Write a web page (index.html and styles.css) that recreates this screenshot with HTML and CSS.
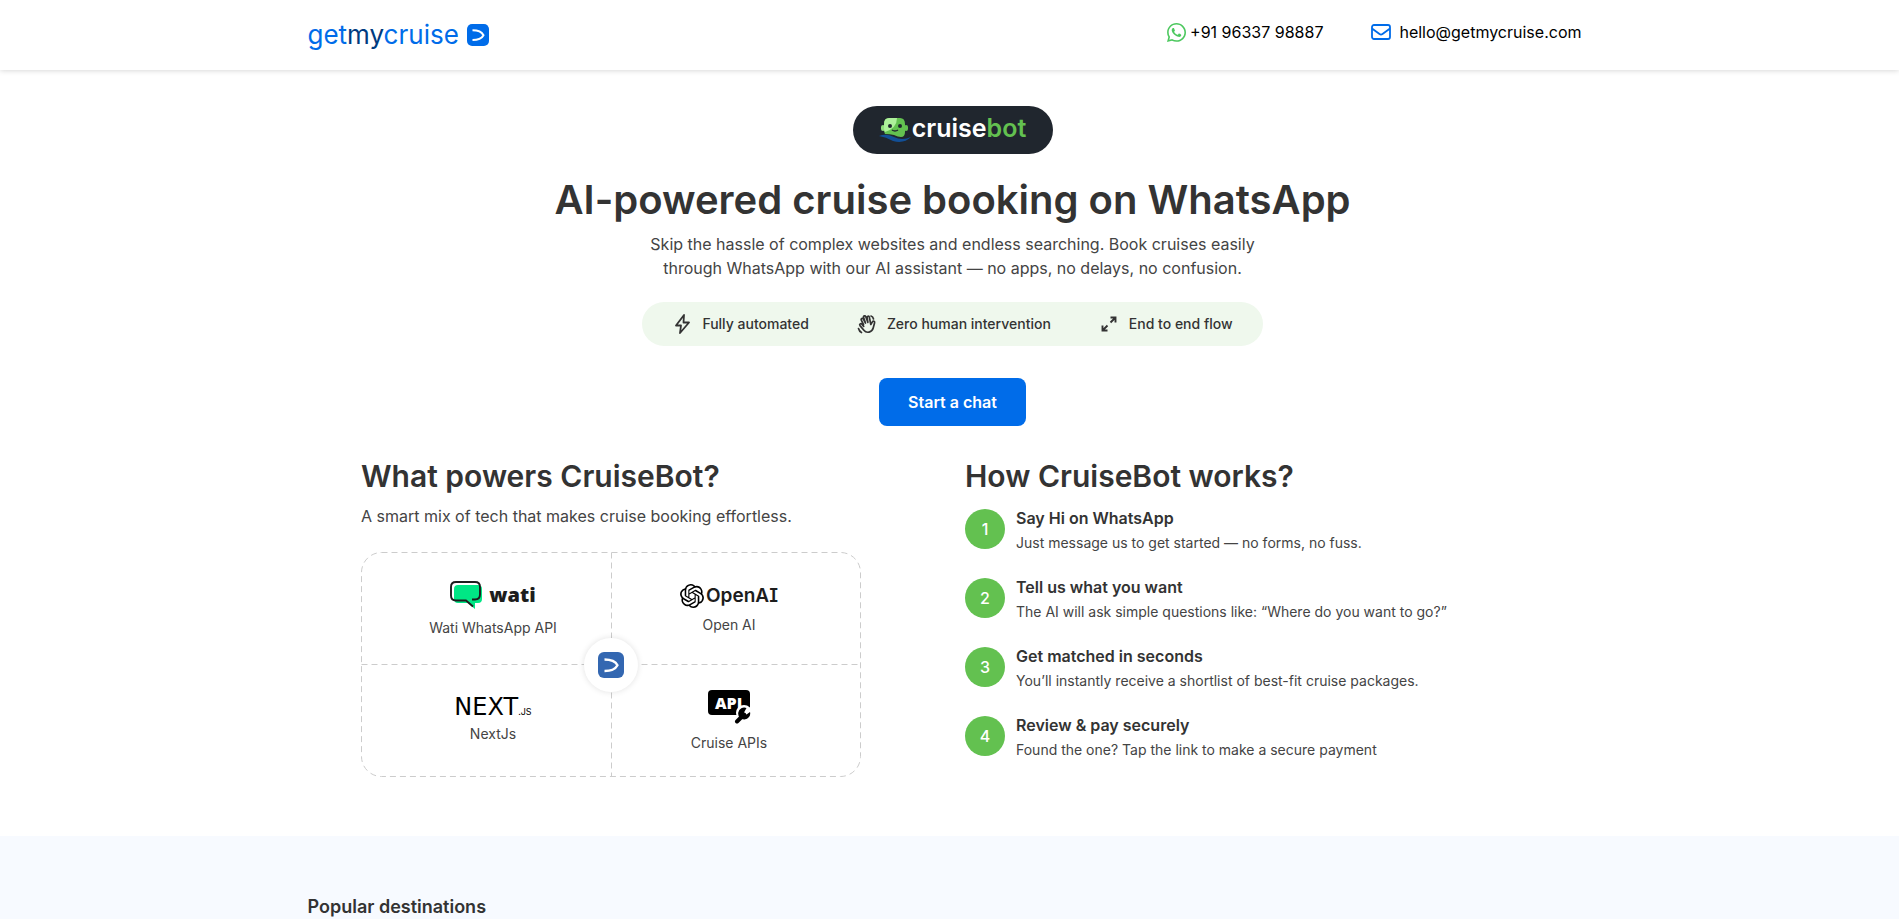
FILE: index.html
```
<!DOCTYPE html>
<html lang="en">
<head>
    <meta charset="UTF-8">
    <meta name="viewport" content="width=device-width, initial-scale=1.0">
    <title>CruiseBot | getmycruise</title>
    <link rel="stylesheet" href="styles.css">
</head>
<body>

    <header class="header">
        <div class="container header-inner">
            <a class="logo" href="#" aria-label="getmycruise">
                <span>get<span class="logo-dark">my</span>cruise</span>
                <svg class="logo-mark" viewBox="0 0 26 26">
                    <rect width="26" height="26" rx="6" fill="#006ce9"/>
                    <path d="M6.5 7.5c7 0 11 2 13 5.700-2 3.700-6 5.800-13 5.800" fill="none" stroke="#fff" stroke-width="2.4" stroke-linejoin="round"/>
                </svg>
            </a>
            <nav class="contact">
                <a class="contact-link" href="tel:+919633798887">
                    <svg class="icon-whatsapp" viewBox="0 32 448 448"><path fill="#4dc85f" d="M380.9 97.1C339 55.1 283.2 32 223.9 32c-122.4 0-222 99.6-222 222 0 39.1 10.2 77.3 29.6 111L0 480l117.7-30.9c32.4 17.7 68.9 27 106.1 27h.1c122.3 0 224.1-99.6 224.1-222 0-59.3-25.2-115-67.1-157zm-157 341.6c-33.2 0-65.7-8.9-94-25.7l-6.7-4-69.8 18.3L72 359.2l-4.4-7c-18.5-29.4-28.2-63.3-28.2-98.2 0-101.7 82.8-184.5 184.6-184.5 49.3 0 95.6 19.2 130.4 54.1 34.8 34.9 56.2 81.2 56.1 130.5 0 101.8-84.9 184.6-186.6 184.6zm101.2-138.2c-5.5-2.8-32.8-16.2-37.9-18-5.1-1.9-8.8-2.8-12.5 2.8-3.7 5.6-14.3 18-17.6 21.8-3.2 3.7-6.5 4.2-12 1.4-32.6-16.3-54-29.1-75.5-66-5.7-9.8 5.7-9.1 16.3-30.3 1.8-3.7.9-6.9-.5-9.7-1.4-2.8-12.5-30.1-17.1-41.2-4.5-10.8-9.1-9.3-12.5-9.5-3.2-.2-6.9-.2-10.6-.2-3.7 0-9.7 1.4-14.8 6.9-5.1 5.6-19.4 19-19.4 46.3 0 27.3 19.9 53.7 22.6 57.4 2.8 3.7 39.1 59.7 94.8 83.8 35.2 15.2 49 16.5 66.6 13.9 10.7-1.6 32.8-13.4 37.4-26.4 4.6-13 4.6-24.1 3.2-26.4-1.3-2.5-5-3.9-10.5-6.6z"/></svg>
                    +91 96337 98887
                </a>
                <a class="contact-link contact-mail" href="mailto:hello@getmycruise.com">
                    <svg class="icon-mail" viewBox="0 0 20 16" fill="none" stroke="#006ce9" stroke-width="1.8" stroke-linejoin="round"><rect x="1" y="1" width="18" height="14" rx="2"/><path d="M1 4.5l7.5 5.5q1.5 1 3 0L19 4.5"/></svg>
                    hello@getmycruise.com
                </a>
            </nav>
        </div>
    </header>

    <main class="main">
        <section class="hero">
            <div class="bot-badge">
                <svg class="bot-face" viewBox="0 0 32 26">
                    <rect x="2" y="8" width="4" height="6" rx="2" fill="#8fdc7c"/>
                    <rect x="25" y="8" width="4" height="6" rx="2" fill="#63c150"/>
                    <path d="M10 1h11q5 0 5 6v8q0 5-4 5-3 0-7-2-4-1-9-1-1-2-1-4V7q0-6 5-6z" fill="#63c150"/>
                    <path d="M10 1h8q0 10-12 14-1-1-1-3V7q0-6 5-6z" fill="#aef09b"/>
                    <circle cx="11" cy="9" r="2" fill="#20262e"/>
                    <circle cx="21" cy="9" r="2" fill="#20262e"/>
                    <path d="M13 13q3 2 6 0" fill="none" stroke="#20262e" stroke-width="1.5"/>
                    <path d="M0 19q7-3 15 1 8 4 17 0-7 7-18 4-7-4-14-5z" fill="#124f96"/>
                </svg>
                <span class="bot-name">cruise<span class="bot-green">bot</span></span>
            </div>
            <h1 class="hero-title">AI-powered cruise booking on WhatsApp</h1>
            <p class="hero-text">Skip the hassle of complex websites and endless searching. Book cruises easily through WhatsApp with our AI assistant — no apps, no delays, no confusion.</p>
            <ul class="features">
                <li>
                    <svg class="icon" viewBox="0 0 20 20" fill="none" stroke="#333" stroke-width="1.8" stroke-linejoin="round"><path d="M12 1L4 11.500h5L8 19l9-10.500h-5.500z"/></svg>
                    Fully automated
                </li>
                <li>
                    <svg class="icon" viewBox="0 0 20 20" fill="none" stroke="#333" stroke-width="1.7" stroke-linecap="round" stroke-linejoin="round"><path d="M6.5 10.5L4.3 6.200c-.8-1.600 1.300-2.600 2.100-1.100L8.5 9 6.600 3.500c-.6-1.600 1.600-2.400 2.200-.8l2.100 5.700-.8-4.700c-.3-1.700 2-2.100 2.300-.4l1.400 7.200 1.600-2.600c.9-1.400 2.600-.5 2.200.9l-1.400 5.200c-1.200 4.500-6.700 5.600-9.300 2.300L3 11.600c-1-1.400.8-2.700 1.900-1.400l1.800 2.200"/><path d="M14 2q2 .5 2.500 3M1.500 14.500q.8 3 3 4"/></svg>
                    Zero human intervention
                </li>
                <li>
                    <svg class="icon" viewBox="0 0 20 20" fill="none" stroke="#333" stroke-width="1.9"><path d="M11.5 8.5L16 4M11.5 3.5h5v5M8.5 11.5L4 16M3.5 11.5v5h5"/></svg>
                    End to end flow
                </li>
            </ul>
            <button class="chat-button" type="button">Start a chat</button>
        </section>

        <div class="columns">
            <section class="powers">
                <h2 class="section-title">What powers CruiseBot?</h2>
                <p class="powers-text">A smart mix of tech that makes cruise booking effortless.</p>
                <div class="tech-grid">
                    <svg class="tech-lines" fill="none" stroke="#ccc" stroke-dasharray="6 4">
                        <g transform="translate(0.5 0.5)">
                            <rect class="tech-frame" rx="20"/>
                            <line x1="50%" y1="0" x2="50%" y2="100%"/>
                            <line x1="0" y1="112" x2="100%" y2="112"/>
                        </g>
                    </svg>
                    <div class="tech tech-left">
                        <div class="tech-logo">
                            <svg class="wati-icon" viewBox="0 0 34 28">
                                <path d="M8 4h20q4 0 4 4v10q0 4-4 4h-3v6l-7-6H8q-4 0-4-4V8q0-4 4-4z" fill="#00e785"/>
                                <path d="M22 18.500h3q5 0 5-5V6q0-5-5-5H6Q1 1 1 6v8.500q0 5 5 5h10l7 6" fill="none" stroke="#1d1d1d" stroke-width="1.9"/>
                            </svg>
                            <span class="wati-name">wati</span>
                        </div>
                        <p>Wati WhatsApp API</p>
                    </div>
                    <div class="tech tech-right tech-openai">
                        <div class="tech-logo openai">
                            <svg class="openai-icon" viewBox="0 0 24 24"><path d="M22.2819 9.8211a5.9847 5.9847 0 0 0-.5157-4.9108 6.0462 6.0462 0 0 0-6.5098-2.9A6.0651 6.0651 0 0 0 4.9807 4.1818a5.9847 5.9847 0 0 0-3.9977 2.9 6.0462 6.0462 0 0 0 .7427 7.0966 5.98 5.98 0 0 0 .511 4.9107 6.051 6.051 0 0 0 6.5146 2.9001A5.9847 5.9847 0 0 0 13.2599 24a6.0557 6.0557 0 0 0 5.7718-4.2058 5.9894 5.9894 0 0 0 3.9977-2.9001 6.0557 6.0557 0 0 0-.7475-7.0729zm-9.022 12.6081a4.4755 4.4755 0 0 1-2.8764-1.0408l.1419-.0804 4.7783-2.7582a.7948.7948 0 0 0 .3927-.6813v-6.7369l2.02 1.1686a.071.071 0 0 1 .038.0615v5.5826a4.504 4.504 0 0 1-4.4945 4.4944zm-9.6607-4.1254a4.4708 4.4708 0 0 1-.5346-3.0137l.142.0852 4.783 2.7582a.7712.7712 0 0 0 .7806 0l5.8428-3.3685v2.3324a.0804.0804 0 0 1-.0332.0615L9.74 19.9502a4.4992 4.4992 0 0 1-6.1408-1.6464zM2.3408 7.8956a4.485 4.485 0 0 1 2.3655-1.9728V11.6a.7664.7664 0 0 0 .3879.6765l5.8144 3.3543-2.0201 1.1685a.0757.0757 0 0 1-.071 0l-4.8303-2.7865A4.504 4.504 0 0 1 2.3408 7.872zm16.5963 3.8558L13.1038 8.364 15.1192 7.2a.0757.0757 0 0 1 .071 0l4.8303 2.7913a4.4944 4.4944 0 0 1-.6765 8.1042v-5.6772a.79.79 0 0 0-.407-.667zm2.0107-3.0231l-.142-.0852-4.7735-2.7818a.7759.7759 0 0 0-.7854 0L9.409 9.2297V6.8974a.0662.0662 0 0 1 .0284-.0615l4.8303-2.7866a4.4992 4.4992 0 0 1 6.6802 4.66zM8.3065 12.863l-2.02-1.1638a.0804.0804 0 0 1-.038-.0567V6.0742a4.4992 4.4992 0 0 1 7.3757-3.4537l-.142.0805L8.704 5.459a.7948.7948 0 0 0-.3927.6813zm1.0976-2.3654l2.602-1.4998 2.6069 1.4998v2.9994l-2.5974 1.4997-2.6067-1.4997Z"/></svg>
                            <span class="openai-name">OpenAI</span>
                        </div>
                        <p>Open AI</p>
                    </div>
                    <div class="tech tech-left">
                        <div class="tech-logo next">
                            <span class="next-name">NEXT</span><span class="next-js">.JS</span>
                        </div>
                        <p>NextJs</p>
                    </div>
                    <div class="tech tech-right">
                        <svg class="api-icon" viewBox="0 0 44 34">
                            <rect x="1" width="42" height="25" rx="4"/>
                            <text class="api-name" x="8" y="19">API</text>
                            <circle cx="37" cy="23" r="8" fill="#fff"/>
                            <path d="M30 31l6-6" stroke="#fff" stroke-width="9"/>
                            <path d="M30 31.500l7-7" stroke="#000" stroke-width="4" stroke-linecap="round"/>
                            <path d="M39.500 18a6 6 0 1 0 3.500 4l-3.500 2.500-2.500-2z"/>
                        </svg>
                        <p>Cruise APIs</p>
                    </div>
                    <div class="tech-center">
                        <svg class="center-mark" viewBox="0 0 26 26">
                            <rect width="26" height="26" rx="6" fill="#3367b1"/>
                            <path d="M6.5 7.5c7 0 11 2 13 5.700-2 3.700-6 5.800-13 5.800" fill="none" stroke="#fff" stroke-width="2.4" stroke-linejoin="round"/>
                        </svg>
                    </div>
                </div>
            </section>

            <section class="works">
                <h2 class="section-title">How CruiseBot works?</h2>
                <ol class="steps">
                    <li class="step">
                        <span class="step-number">1</span>
                        <div>
                            <h3>Say Hi on WhatsApp</h3>
                            <p>Just message us to get started — no forms, no fuss.</p>
                        </div>
                    </li>
                    <li class="step">
                        <span class="step-number">2</span>
                        <div>
                            <h3>Tell us what you want</h3>
                            <p>The AI will ask simple questions like: “Where do you want to go?”</p>
                        </div>
                    </li>
                    <li class="step">
                        <span class="step-number">3</span>
                        <div>
                            <h3>Get matched in seconds</h3>
                            <p>You’ll instantly receive a shortlist of best-fit cruise packages.</p>
                        </div>
                    </li>
                    <li class="step">
                        <span class="step-number">4</span>
                        <div>
                            <h3>Review &amp; pay securely</h3>
                            <p>Found the one? Tap the link to make a secure payment</p>
                        </div>
                    </li>
                </ol>
            </section>
        </div>
    </main>

    <section class="destinations">
        <div class="container">
            <h2 class="destinations-title">Popular destinations</h2>
        </div>
    </section>

</body>
</html>
```
FILE: styles.css
```
* {
    box-sizing: border-box;
}

body {
    margin: 0;
    font-family: Inter, sans-serif;
    font-size: 16px;
    line-height: 24px;
    color: #333;
    background-color: #fff;
}

h1, h2, h3, p, ul, ol {
    margin: 0;
    padding: 0;
}

ul, ol {
    list-style: none;
}

svg {
    display: block;
    flex-shrink: 0;
}

.container {
    max-width: 1290px;
    margin: 0 auto;
}

.header, .main, .destinations {
    padding-left: 6px;
}

.header {
    box-shadow: 0 0 6px rgba(0, 0, 0, 0.2);
}

.header-inner {
    display: flex;
    justify-content: space-between;
    height: 70px;
    padding: 20px 16px 0 0;
}

.logo {
    display: flex;
    align-items: center;
    gap: 8px;
    height: 29px;
    font-size: 26px;
    line-height: 26px;
    color: #006ce9;
    text-decoration: none;
}

.logo-dark {
    color: #003b80;
}

.logo-mark {
    width: 22px;
    height: 22px;
}

.contact {
    display: flex;
    gap: 48px;
}

.contact-link {
    display: flex;
    align-items: center;
    gap: 4px;
    height: 24px;
    color: #000;
    text-decoration: none;
}

.contact-mail {
    gap: 8px;
}

.icon-whatsapp {
    width: 19px;
    height: 19px;
}

.icon-mail {
    width: 20px;
    height: 16px;
}

.hero {
    display: flex;
    flex-direction: column;
    align-items: center;
    padding-top: 36px;
    text-align: center;
}

.bot-badge {
    display: flex;
    justify-content: center;
    align-items: center;
    gap: 1px;
    width: 200px;
    height: 48px;
    padding-bottom: 4px;
    background-color: #20262e;
    border-radius: 24px;
}

.bot-face {
    width: 32px;
    height: 26px;
    margin-top: 4px;
}

.bot-name {
    font-size: 25px;
    font-weight: 600;
    color: #fff;
}

.bot-green {
    color: #63c150;
}

.hero-title {
    margin-top: 21px;
    font-size: 40px;
    font-weight: 600;
    line-height: 50px;
}

.hero-text {
    max-width: 620px;
    margin-top: 7px;
    color: #444;
}

.features {
    display: flex;
    gap: 48px;
    margin-top: 22px;
    padding: 10px 30px;
    background-color: #eff8ed;
    border-radius: 22px;
    font-size: 14px;
    font-weight: 500;
}

.features li {
    display: flex;
    align-items: center;
    gap: 10px;
}

.icon {
    width: 20px;
    height: 20px;
}

.chat-button {
    height: 48px;
    margin-top: 32px;
    padding: 0 29px;
    background-color: #006ce9;
    color: #fff;
    border: none;
    border-radius: 8px;
    font-family: inherit;
    font-size: 16px;
    font-weight: 600;
    cursor: pointer;
}

.columns {
    display: grid;
    grid-template-columns: 500px 500px;
    gap: 104px;
    max-width: 1183px;
    margin: 0 auto;
    padding: 32px 0 59px;
}

.section-title {
    font-size: 30px;
    font-weight: 600;
    line-height: 36px;
}

.powers-text {
    margin-top: 10px;
    color: #444;
}

.tech-grid {
    position: relative;
    display: grid;
    grid-template-columns: 1fr 1fr;
    grid-template-rows: 112px 112px;
    margin-top: 24px;
    padding-top: 1px;
}

.tech-lines {
    position: absolute;
    inset: 0;
    width: 100%;
    height: 100%;
}

.tech-frame {
    width: calc(100% - 1px);
    height: calc(100% - 1px);
}

.tech {
    display: flex;
    flex-direction: column;
    align-items: center;
    justify-content: center;
    gap: 8px;
    font-size: 14px;
    line-height: 21px;
    color: #444;
}

.tech-left {
    padding-left: 14px;
}

.tech-right {
    padding-right: 14px;
}

.tech-openai {
    gap: 6px;
}

.tech-logo {
    display: flex;
    align-items: center;
    gap: 5px;
    height: 28px;
    color: #1d1d1d;
}

.wati-icon {
    width: 34px;
    height: 28px;
}

.wati-name {
    font-family: "Open Sans", sans-serif;
    font-size: 20px;
    font-weight: 800;
}

.openai {
    gap: 2px;
    height: 24px;
}

.openai-icon {
    width: 24px;
    height: 24px;
}

.openai-name {
    font-size: 19px;
    font-weight: 600;
    font-feature-settings: "ss02";
}

.next {
    align-items: baseline;
    gap: 0;
    height: 16px;
    line-height: 16px;
    color: #000;
}

.next-name {
    font-family: "DejaVu Sans", sans-serif;
    font-size: 24px;
}

.next-js {
    font-size: 9px;
}

.api-icon {
    width: 44px;
    height: 34px;
}

.api-name {
    font-family: "Open Sans", sans-serif;
    font-size: 16px;
    font-weight: 800;
    fill: #fff;
}

.tech-center {
    position: absolute;
    top: 50%;
    left: 50%;
    display: flex;
    align-items: center;
    justify-content: center;
    width: 54px;
    height: 54px;
    transform: translate(-50%, -50%);
    background-color: #fff;
    border-radius: 50%;
    box-shadow: 0 0 6px rgba(0, 0, 0, 0.12);
}

.center-mark {
    width: 26px;
    height: 26px;
}

.steps {
    display: flex;
    flex-direction: column;
    gap: 22px;
    margin-top: 12px;
}

.step {
    display: flex;
    gap: 11px;
}

.step-number {
    display: flex;
    align-items: center;
    justify-content: center;
    flex-shrink: 0;
    width: 40px;
    height: 40px;
    margin-top: 3px;
    background-color: #63c150;
    color: #fff;
    border-radius: 50%;
    font-weight: 500;
}

.step h3 {
    font-size: 16px;
    font-weight: 600;
}

.step p {
    margin-top: 2px;
    font-size: 14px;
    line-height: 21px;
    color: #444;
}

.destinations {
    min-height: 140px;
    padding-top: 57px;
    background-color: #f7faff;
}

.destinations-title {
    font-size: 18px;
    font-weight: 600;
    line-height: 27px;
}
```
